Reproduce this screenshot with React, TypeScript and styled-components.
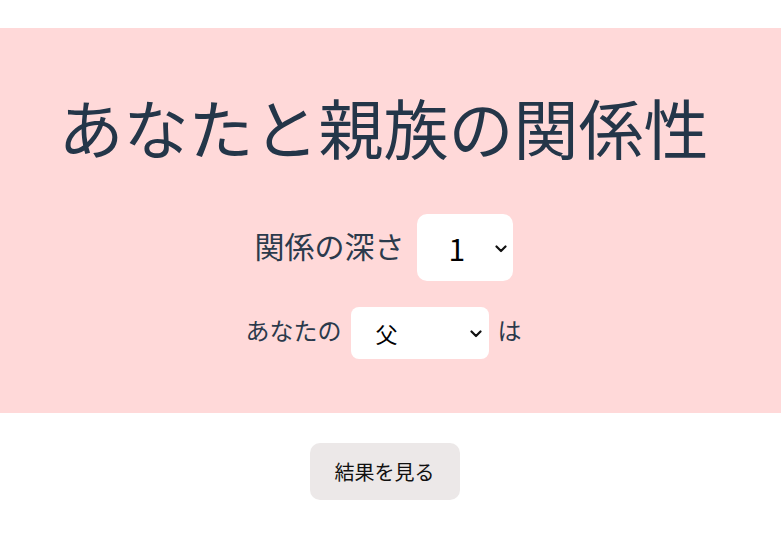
import React, { useState } from "react";
import styled, { createGlobalStyle } from "styled-components";

const GlobalStyle = createGlobalStyle`
  html, body { margin: 0; padding: 0; background: #ffffff; }
  body { font-family: "Noto Sans CJK JP", "Noto Sans", sans-serif; }
`;

const Page = styled.div`
  padding-top: 28px;
  display: flex;
  flex-direction: column;
  align-items: center;
`;

const Hero = styled.section`
  align-self: stretch;
  background: #ffd9d9;
  padding: 53px 14px 54px 0;
  display: flex;
  flex-direction: column;
  align-items: center;
`;

const Title = styled.h1`
  margin: 0;
  font-size: 65px;
  font-weight: 400;
  line-height: 90px;
  color: #243649;
  letter-spacing: 0;
`;

const Row = styled.div<{ $gap: number; $top: number }>`
  display: flex;
  align-items: center;
  gap: ${(p) => p.$gap}px;
  margin-top: ${(p) => p.$top}px;
`;

const Label = styled.span<{ $size: number }>`
  font-size: ${(p) => p.$size}px;
  color: #2b3a4c;
  line-height: 1.2;
  padding-bottom: 5px;
`;

const SelectWrap = styled.div`
  position: relative;
  display: inline-flex;
`;

const Select = styled.select<{ $w: number; $h: number; $size: number; $pl: number; $r: number }>`
  appearance: none;
  -webkit-appearance: none;
  border: none;
  outline: none;
  background: #ffffff;
  width: ${(p) => p.$w}px;
  height: ${(p) => p.$h}px;
  border-radius: ${(p) => p.$r}px;
  padding: 0 0 0 ${(p) => p.$pl}px;
  font-family: "Noto Sans CJK JP", "Noto Sans", sans-serif;
  font-size: ${(p) => p.$size}px;
  color: #000000;
  cursor: pointer;
`;

const Chevron = styled.svg<{ $right: number }>`
  position: absolute;
  right: ${(p) => p.$right}px;
  top: 50%;
  width: 12px;
  height: 8px;
  margin-top: -3px;
  pointer-events: none;
`;

const Button = styled.button`
  margin-top: 30px;
  margin-right: 12px;
  width: 150px;
  height: 57px;
  border: none;
  border-radius: 10px;
  background: #ece8e8;
  font-family: "Noto Sans CJK JP", "Noto Sans", sans-serif;
  font-size: 20px;
  color: #111111;
  cursor: pointer;
`;

const ChevronIcon = ({ right }: { right: number }) => (
  <Chevron $right={right} viewBox="0 0 12 8">
    <path d="M1.5 1.5 L6 6 L10.5 1.5" fill="none" stroke="#111" strokeWidth="2.2" strokeLinecap="round" strokeLinejoin="round" />
  </Chevron>
);

export default function App() {
  const [depth, setDepth] = useState("1");
  const [rel, setRel] = useState("父");
  return (
    <>
      <GlobalStyle />
      <Page>
        <Hero>
          <Title>あなたと親族の関係性</Title>
          <Row $gap={12} $top={43}>
            <Label $size={30}>関係の深さ</Label>
            <SelectWrap>
              <Select $w={96} $h={67} $size={30} $pl={32} $r={10} value={depth} onChange={(e) => setDepth(e.target.value)}>
                <option value="1">1</option>
                <option value="2">2</option>
                <option value="3">3</option>
              </Select>
              <ChevronIcon right={6} />
            </SelectWrap>
          </Row>
          <Row $gap={9} $top={26}>
            <Label $size={24}>あなたの</Label>
            <SelectWrap>
              <Select $w={138} $h={52} $size={22} $pl={25} $r={8} value={rel} onChange={(e) => setRel(e.target.value)}>
                <option value="父">父</option>
                <option value="母">母</option>
              </Select>
              <ChevronIcon right={7} />
            </SelectWrap>
            <Label $size={24}>は</Label>
          </Row>
        </Hero>
        <Button>結果を見る</Button>
      </Page>
    </>
  );
}
